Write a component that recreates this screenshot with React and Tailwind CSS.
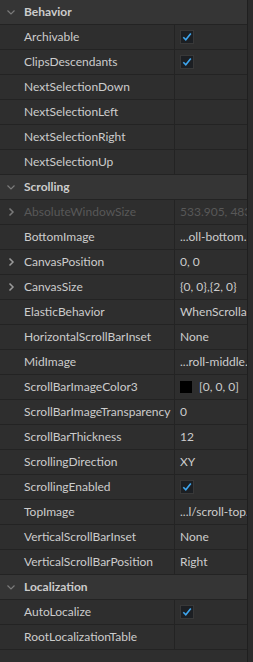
import React from "react"

const Chevron = ({ open, dim }) => (
  <svg width="10" height="10" viewBox="0 0 10 10" className="shrink-0">
    {open ? (
      <path d="M1.5 3.5 L5 7 L8.5 3.5" fill="none" stroke="#7a7a7a" strokeWidth="1.2" />
    ) : (
      <path d="M3.5 1.5 L7 5 L3.5 8.5" fill="none" stroke={dim ? "#7a7a7a" : "#9a9a9a"} strokeWidth="1.5" />
    )}
  </svg>
)

const Check = () => (
  <div className="w-[14px] h-[14px] bg-[#1c1f23] border border-[#383838] flex items-center justify-center">
    <svg width="12" height="12" viewBox="0 0 12 12">
      <path d="M2.3 6.3 L4.8 8.8 L9.8 2.6" fill="none" stroke="#3ea6ef" strokeWidth="1.6" />
    </svg>
  </div>
)

const sections = [
  {
    title: "Behavior",
    rows: [
      { name: "Archivable", check: true },
      { name: "ClipsDescendants", check: true },
      { name: "NextSelectionDown" },
      { name: "NextSelectionLeft" },
      { name: "NextSelectionRight" },
      { name: "NextSelectionUp" },
    ],
  },
  {
    title: "Scrolling",
    rows: [
      { name: "AbsoluteWindowSize", value: "533.905, 483.8", expand: true, disabled: true },
      { name: "BottomImage", value: "...oll-bottom." },
      { name: "CanvasPosition", value: "0, 0", expand: true },
      { name: "CanvasSize", value: "{0, 0},{2, 0}", expand: true },
      { name: "ElasticBehavior", value: "WhenScrollable" },
      { name: "HorizontalScrollBarInset", value: "None" },
      { name: "MidImage", value: "...roll-middle." },
      { name: "ScrollBarImageColor3", value: "[0, 0, 0]", color: "#000" },
      { name: "ScrollBarImageTransparency", value: "0" },
      { name: "ScrollBarThickness", value: "12" },
      { name: "ScrollingDirection", value: "XY" },
      { name: "ScrollingEnabled", check: true },
      { name: "TopImage", value: "...l/scroll-top." },
      { name: "VerticalScrollBarInset", value: "None" },
      { name: "VerticalScrollBarPosition", value: "Right" },
    ],
  },
  {
    title: "Localization",
    rows: [
      { name: "AutoLocalize", check: true },
      { name: "RootLocalizationTable" },
    ],
  },
]

const Row = ({ r }) => (
  <div className="flex h-[25px] border-b border-[#232323]">
    <div className="w-[175px] shrink-0 flex items-center border-r border-[#232323] relative">
      {r.expand && (
        <span className="absolute left-[6px] top-[7px]">
          <Chevron dim={r.disabled} />
        </span>
      )}
      <span className={`pl-[24px] whitespace-nowrap ${r.disabled ? "text-[#585858]" : "text-[#cccccc]"}`}>
        {r.name}
      </span>
    </div>
    <div className="flex-1 min-w-0 overflow-hidden flex items-center pl-[5px] whitespace-nowrap">
      {r.check && <Check />}
      {r.color && <div className="w-[12px] h-[12px] bg-black mr-[7px] shrink-0" />}
      {r.value && (
        <span className={r.disabled ? "text-[#585858]" : "text-[#cccccc]"}>{r.value}</span>
      )}
    </div>
  </div>
)

export default function App() {
  return (
    <div
      className="w-[253px] h-[662px] bg-[#2e2e2e] flex overflow-hidden text-[12px]"
      style={{ fontFamily: 'Lato, "Noto Sans", sans-serif' }}
    >
      <div className="w-[248px] border-r border-[#1f1f1f] flex flex-col">
        {sections.map((s) => (
          <div key={s.title}>
            <div className="flex items-center h-[25px] bg-[#353535] border-b border-[#232323]">
              <span className="pl-[6px] pr-[8px]">
                <Chevron open />
              </span>
              <span className="font-bold text-[#cccccc]">{s.title}</span>
            </div>
            {s.rows.map((r) => (
              <Row key={r.name} r={r} />
            ))}
          </div>
        ))}
      </div>
      <div className="flex-1 bg-[#2b2b2b]" />
    </div>
  )
}
